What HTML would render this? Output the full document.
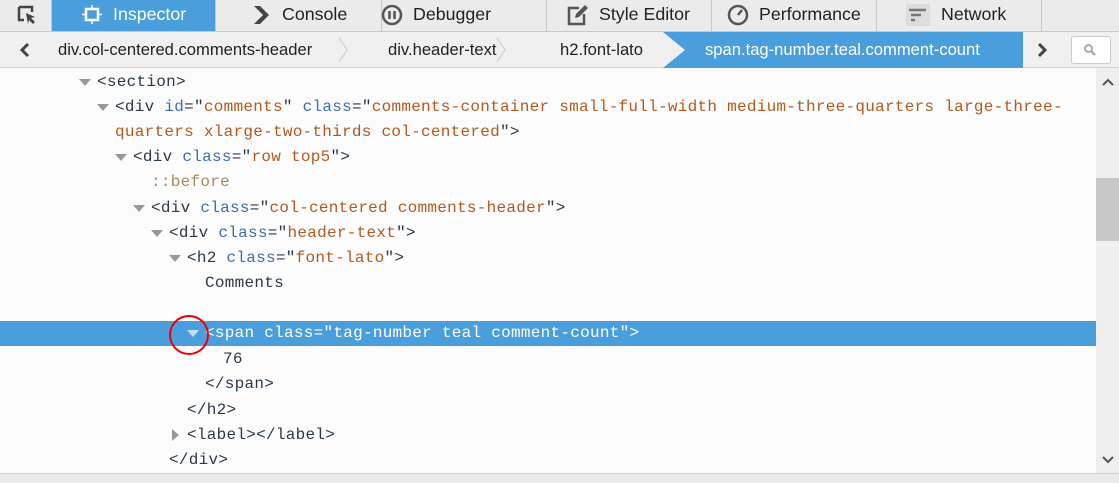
<!DOCTYPE html>
<html><head><meta charset="utf-8"><style>
*{margin:0;padding:0;box-sizing:border-box}
body{width:1119px;height:483px;overflow:hidden;background:#fcfcfc;font-family:"Liberation Sans",sans-serif;position:relative}
.tb{position:absolute;left:0;top:0;width:1119px;height:32px;background:#ebebeb;border-bottom:1px solid #c8c8c8}
.tab{position:absolute;top:0;height:31px;border-right:1px solid #c8c8c8;font-size:17.8px;color:#222}
.ic{position:absolute;top:4px}
.lb{position:absolute;top:4px}
.bc{position:absolute;left:0;top:32px;width:1119px;height:36px;background:#f0f0f0;border-bottom:1px solid #d4d4d4;font-size:16.6px;color:#222}
.bi{position:absolute;top:8px;white-space:nowrap}
.ln{position:absolute;height:25px;line-height:25px;white-space:pre;color:#2b3946;font-family:"Liberation Mono",monospace;font-size:16px;letter-spacing:0.27px}
.t{position:absolute;width:0;height:0;border-left:6px solid transparent;border-right:6px solid transparent;border-top:7px solid #999}
.a{color:#3f70a0}
.v{color:#b05a22}
</style></head><body>
<div class="tb">
<div class="tab" style="left:0;width:52px"><svg class="ic" width="22" height="22" viewBox="0 0 22 22" style="left:16px"><path d="M3 3h13v5M3 3v13h5" stroke="#444" stroke-width="2.5" fill="none"/><path d="M10 9l9 4-4 1 4 4-2 2-4-4-1 4z" fill="#444"/></svg></div>
<div class="tab" style="left:52px;width:164px;background:#4a9edb;color:#fff"><svg class="ic" width="24" height="22" viewBox="0 0 24 22" style="left:28px"><rect x="6" y="5" width="12" height="11" stroke="#fff" stroke-width="2.5" fill="none"/><path d="M2 10.5h4M18 10.5h4M12 1v4M12 16v4" stroke="#fff" stroke-width="1.5"/></svg><span class="lb" style="left:61px">Inspector</span></div>
<div class="tab" style="left:216px;width:166px"><svg class="ic" width="22" height="22" viewBox="0 0 22 22" style="left:34px"><path d="M4 2l9 9-9 9h6l9-9-9-9z" fill="#444"/></svg><span class="lb" style="left:66px">Console</span></div>
<div class="tab" style="left:382px;width:165px"><svg class="ic" width="22" height="22" viewBox="0 0 22 22" style="left:-1px"><circle cx="11" cy="11" r="9" stroke="#555" stroke-width="2.5" fill="none"/><path d="M8.5 7v8M13.5 7v8" stroke="#555" stroke-width="2.5"/></svg><span class="lb" style="left:31px">Debugger</span></div>
<div class="tab" style="left:547px;width:165px"><svg class="ic" width="22" height="22" viewBox="0 0 22 22" style="left:19px"><path d="M13 4H3v16h15V10" stroke="#555" stroke-width="2.5" fill="none"/><path d="M9 14l1-4 9-9 3 3-9 9z" fill="#555"/></svg><span class="lb" style="left:52px">Style Editor</span></div>
<div class="tab" style="left:712px;width:165px"><svg class="ic" width="22" height="22" viewBox="0 0 22 22" style="left:15px"><circle cx="11" cy="11" r="9" stroke="#555" stroke-width="2.5" fill="none"/><path d="M11 11l4-5" stroke="#555" stroke-width="2.5"/></svg><span class="lb" style="left:47px">Performance</span></div>
<div class="tab" style="left:877px;width:165px"><svg class="ic" width="24" height="22" viewBox="0 0 24 22" style="left:29px"><rect x="0" y="0" width="24" height="22" fill="#ddd"/><path d="M3 6h17M5 11h10M5 16h4" stroke="#777" stroke-width="2.5"/></svg><span class="lb" style="left:64px">Network</span></div>
</div>
<div class="bc">
<svg style="position:absolute;left:19px;top:10px" width="12" height="16" viewBox="0 0 12 16"><path d="M9 2L3 8l6 6" stroke="#444" stroke-width="3" fill="none"/></svg>
<span class="bi" style="left:58px">div.col-centered.comments-header</span>
<svg style="position:absolute;left:338px;top:5px" width="10" height="26" viewBox="0 0 10 26"><path d="M1 1l8 12-8 12" stroke="#ccc" stroke-width="1" fill="none"/></svg>
<span class="bi" style="left:388px">div.header-text</span>
<svg style="position:absolute;left:496px;top:5px" width="10" height="26" viewBox="0 0 10 26"><path d="M1 1l8 12-8 12" stroke="#ccc" stroke-width="1" fill="none"/></svg>
<span class="bi" style="left:560px">h2.font-lato</span>
<svg style="position:absolute;left:663px;top:0" width="360" height="36" viewBox="0 0 360 36"><path d="M0 0H360V36H0L22 18z" fill="#4a9edb"/></svg>
<span class="bi" style="left:705px;color:#fff">span.tag-number.teal.comment-count</span>
<svg style="position:absolute;left:1036px;top:10px" width="12" height="16" viewBox="0 0 12 16"><path d="M3 2l6 6-6 6" stroke="#444" stroke-width="3" fill="none"/></svg>
<div style="position:absolute;left:1071px;top:4px;width:40px;height:28px;background:#fff;border:1px solid #ccc;border-radius:3px"></div>
<svg style="position:absolute;left:1083px;top:11px" width="14" height="14" viewBox="0 0 14 14"><circle cx="5.5" cy="5.5" r="3.5" stroke="#aaa" stroke-width="2" fill="none"/><path d="M8 8l4 4" stroke="#aaa" stroke-width="2.5"/></svg>
</div>
<div style="position:absolute;left:0;top:321px;width:1096px;height:25px;background:#4a9edb"></div>
<div class="t" style="left:79px;top:79px"></div>
<div class="ln" style="left:97px;top:70px">&lt;section&gt;</div>
<div class="t" style="left:97px;top:104px"></div>
<div class="ln" style="left:115px;top:95px">&lt;div <span class="a">id</span>="<span class="v">comments</span>" <span class="a">class</span>="<span class="v">comments-container small-full-width medium-three-quarters large-three-</span></div>
<div class="ln" style="left:115px;top:120px"><span class="v">quarters xlarge-two-thirds col-centered</span>"&gt;</div>
<div class="t" style="left:115px;top:154px"></div>
<div class="ln" style="left:133px;top:145px">&lt;div <span class="a">class</span>="<span class="v">row top5</span>"&gt;</div>
<div class="ln" style="left:151px;top:170px;color:#a58a5b">::before</div>
<div class="t" style="left:133px;top:205px"></div>
<div class="ln" style="left:151px;top:196px">&lt;div <span class="a">class</span>="<span class="v">col-centered comments-header</span>"&gt;</div>
<div class="t" style="left:151px;top:230px"></div>
<div class="ln" style="left:169px;top:221px">&lt;div <span class="a">class</span>="<span class="v">header-text</span>"&gt;</div>
<div class="t" style="left:169px;top:255px"></div>
<div class="ln" style="left:187px;top:246px">&lt;h2 <span class="a">class</span>="<span class="v">font-lato</span>"&gt;</div>
<div class="ln" style="left:205px;top:271px">Comments</div>
<div class="t" style="left:187px;top:330px;border-top-color:#c6def3"></div>
<div class="ln" style="left:205px;top:321px;color:#fff">&lt;span class="tag-number teal comment-count"&gt;</div>
<div style="position:absolute;left:169px;top:315px;width:40px;height:40px;border:2px solid #e00;border-radius:50%"></div>
<div class="ln" style="left:223px;top:347px">76</div>
<div class="ln" style="left:205px;top:372px">&lt;/span&gt;</div>
<div class="ln" style="left:187px;top:398px">&lt;/h2&gt;</div>
<div style="position:absolute;left:172px;top:429px;width:0;height:0;border-top:6px solid transparent;border-bottom:6px solid transparent;border-left:7px solid #999"></div>
<div class="ln" style="left:187px;top:423px">&lt;label&gt;&lt;/label&gt;</div>
<div class="ln" style="left:169px;top:448px">&lt;/div&gt;</div>
<div style="position:absolute;left:1096px;top:68px;width:23px;height:405px;background:#efefef"></div>
<div style="position:absolute;left:1096px;top:178px;width:23px;height:63px;background:#c8c8c8"></div>
<svg style="position:absolute;left:1102px;top:78px" width="12" height="8" viewBox="0 0 12 8"><path d="M1 7l5-5 5 5" stroke="#555" stroke-width="2" fill="none"/></svg>
<svg style="position:absolute;left:1102px;top:456px" width="12" height="8" viewBox="0 0 12 8"><path d="M1 1l5 5 5-5" stroke="#555" stroke-width="2" fill="none"/></svg>
<div style="position:absolute;left:0;top:473px;width:1119px;height:10px;background:#ebebeb;border-top:1px solid #d0d0d0"></div>
</body></html>
